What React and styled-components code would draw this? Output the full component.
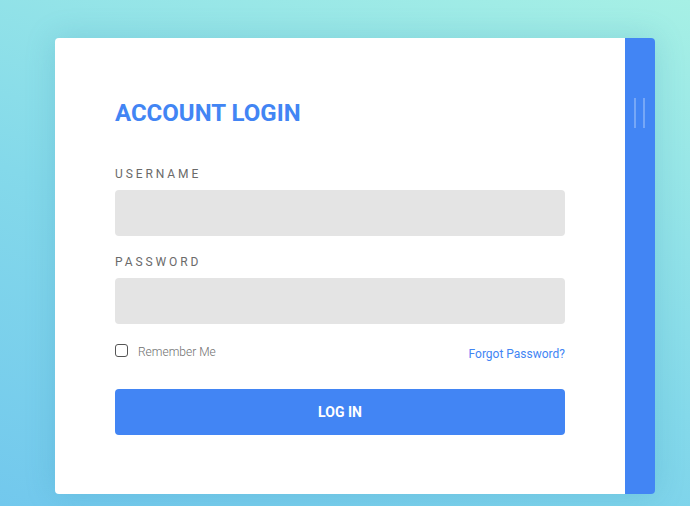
import React from "react";
import styled, { createGlobalStyle } from "styled-components";

const Global = createGlobalStyle`
  html, body { margin: 0; padding: 0; }
  body { font-family: Roboto, "Liberation Sans", sans-serif; }
  * { box-sizing: border-box; }
`;

const Page = styled.div`
  width: 690px;
  height: 506px;
  overflow: hidden;
  background: linear-gradient(20deg, #72c8ed 0%, #84d9ea 45%, #a6f0e5 100%);
  padding: 38px 0 0 55px;
  display: flex;
  align-items: flex-start;
`;

const Card = styled.div`
  width: 600px;
  height: 456px;
  display: flex;
  border-radius: 4px;
  overflow: hidden;
  box-shadow: 0 0 30px rgba(40, 130, 170, 0.22);
`;

const Main = styled.form`
  flex: 1;
  background: #fff;
  padding: 61px 60px 0 60px;
  display: flex;
  flex-direction: column;
`;

const Side = styled.div`
  width: 30px;
  background: #4285f4;
  display: flex;
  justify-content: flex-start;
  padding: 60px 0 0 9px;
  gap: 7px;
`;

const Grip = styled.span`
  width: 2px;
  height: 30px;
  background: rgba(255, 255, 255, 0.28);
`;

const Title = styled.h1`
  margin: 0;
  color: #4285f4;
  font-size: 24px;
  font-weight: 700;
  line-height: 28px;
`;

const Label = styled.label`
  display: block;
  margin-top: ${(p) => p.$top}px;
  font-size: 12px;
  letter-spacing: 2.9px;
  color: #6a6a6a;
  line-height: 14px;
  font-weight: 400;
`;

const Input = styled.input`
  display: block;
  width: 100%;
  height: 46px;
  margin-top: 9px;
  border: none;
  border-radius: 4px;
  background: #e4e4e4;
  outline: none;
`;

const Row = styled.div`
  display: flex;
  justify-content: space-between;
  align-items: flex-start;
  margin-top: 20px;
  height: 14px;
`;

const Check = styled.label`
  display: flex;
  align-items: flex-start;
  font-size: 12px;
  line-height: 16px;
  font-weight: 300;
  color: #6f6f6f;
  gap: 10px;
`;

const Box = styled.span`
  width: 13px;
  height: 13px;
  border: 1.5px solid #555;
  border-radius: 3px;
`;

const Link = styled.a`
  font-size: 12px;
  line-height: 14px;
  color: #4285f4;
  text-decoration: none;
  margin-top: 3px;
`;

const Button = styled.button`
  margin-top: 31px;
  width: 100%;
  height: 46px;
  border: none;
  border-radius: 4px;
  background: #4285f4;
  color: #fff;
  font-family: Roboto, "Liberation Sans", sans-serif;
  font-weight: 700;
  font-size: 14px;
`;

export default function App() {
  return (
    <>
      <Global />
      <Page>
        <Card>
          <Main onSubmit={(e) => e.preventDefault()}>
            <Title>ACCOUNT LOGIN</Title>
            <Label $top={40}>USERNAME</Label>
            <Input type="text" />
            <Label $top={19}>PASSWORD</Label>
            <Input type="password" />
            <Row>
              <Check>
                <Box />
                Remember Me
              </Check>
              <Link href="#">Forgot Password?</Link>
            </Row>
            <Button type="submit">LOG IN</Button>
          </Main>
          <Side>
            <Grip />
            <Grip />
          </Side>
        </Card>
      </Page>
    </>
  );
}
